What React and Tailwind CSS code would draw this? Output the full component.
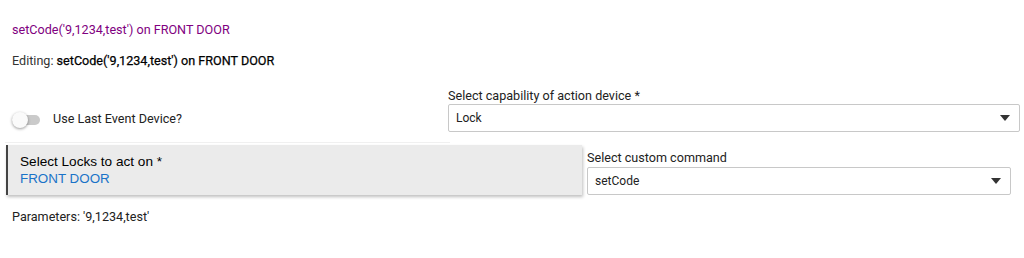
import React from "react";

const Caret = () => (
  <svg width="10" height="6" viewBox="0 0 10 6" className="shrink-0">
    <path d="M0 0 L10 0 L5 6 Z" fill="#333" />
  </svg>
);

const SelectBox = ({ value, className }) => (
  <div className={`flex items-center justify-between h-[28px] border border-[#c8c8c8] rounded-[2px] bg-white pl-[7px] pr-[9px] ${className}`}>
    <span className="text-[12px] text-[#222]">{value}</span>
    <Caret />
  </div>
);

export default function App() {
  return (
    <div className="w-[1024px] h-[258px] bg-white font-['Roboto',sans-serif] text-[#222] relative overflow-hidden">
      <div className="pt-[22px] pl-[12px] text-[12.6px] text-[#800080] leading-[16px]">
        setCode('9,1234,test') on FRONT DOOR
      </div>
      <div className="pt-[15px] pl-[12px] text-[12.6px] leading-[16px] text-[#333]">
        Editing: <span className="text-black [-webkit-text-stroke:0.25px_black]">setCode('9,1234,test') on FRONT DOOR</span>
      </div>

      <div className="flex mt-[18px] h-[56px] border-b border-[#f0f0f0] ml-[5px] w-[445px] overflow-visible">
        <div className="flex items-center pl-[7px] pt-[10px] w-[443px] shrink-0">
          <div className="relative w-[29px] h-[16px] flex items-center">
            <div className="w-[28px] h-[10px] rounded-full bg-[#cacaca]" />
            <div className="absolute left-0 top-0 w-[16px] h-[16px] rounded-full bg-[#fafafa] shadow-[0_1px_3px_rgba(0,0,0,0.4)]" />
          </div>
          <span className="ml-[12px] text-[12.6px] text-[#222]">Use Last Event Device?</span>
        </div>
        <div className="shrink-0 w-[572px]">
          <div className="text-[12.6px] leading-[16px] pt-[1px] text-[#222]">Select capability of action device *</div>
          <SelectBox value="Lock" className="w-[572px]" />
        </div>
      </div>

      <div className="flex mt-[2px] pl-[6px]">
        <div className="w-[576px] h-[50px] bg-[#ebebeb] border-l-2 border-[#444] shadow-[1px_2px_3px_rgba(0,0,0,0.25)] pl-[12px] pt-[9px] font-['Liberation_Sans',Arial,sans-serif] leading-[16px]">
          <div className="text-black text-[13.6px]">Select Locks to act on *</div>
          <div className="text-[#1a73c8] text-[13.4px] mt-[1px]">FRONT DOOR</div>
        </div>
        <div className="ml-[5px] w-[424px]">
          <div className="text-[12.6px] leading-[16px] pt-[5px] text-[#222]">Select custom command</div>
          <SelectBox value="setCode" className="mt-[1px] w-[424px]" />
        </div>
      </div>

      <div className="pl-[12px] pt-[14px] text-[12.6px] leading-[16px] text-[#222]">
        Parameters: '9,1234,test'
      </div>
    </div>
  );
}
